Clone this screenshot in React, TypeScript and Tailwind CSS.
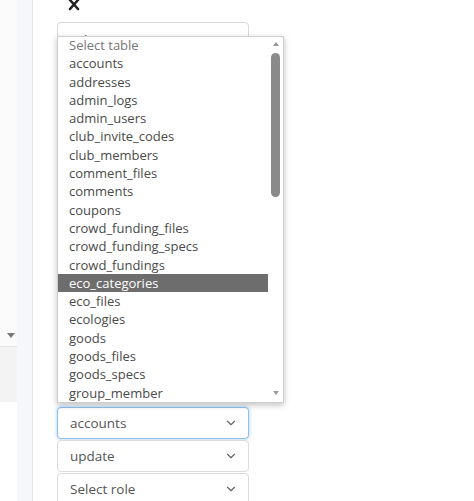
import { ChevronDown } from 'lucide-react'

const tables = [
  'accounts',
  'addresses',
  'admin_logs',
  'admin_users',
  'club_invite_codes',
  'club_members',
  'comment_files',
  'comments',
  'coupons',
  'crowd_funding_files',
  'crowd_funding_specs',
  'crowd_fundings',
  'eco_categories',
  'eco_files',
  'ecologies',
  'goods',
  'goods_files',
  'goods_specs',
  'group_member',
]

function SelectBox({ label, focused = false }: { label: string; focused?: boolean }) {
  return (
    <div
      className={`flex items-center justify-between w-[192px] h-[32px] pl-[12px] pr-[10px] rounded-[4px] bg-white border ${
        focused ? 'border-[#8cc0ee] shadow-[0_0_3px_1px_rgba(100,160,230,0.35)]' : 'border-[#dcdcdc]'
      }`}
    >
      <span className="text-[13.5px] text-[#555]">{label}</span>
      <ChevronDown size={14} strokeWidth={2} className="text-[#666]" />
    </div>
  )
}

export default function App() {
  return (
    <div
      className="relative flex w-[474px] h-[501px] overflow-hidden bg-white"
      style={{ fontFamily: '"Open Sans", "Noto Sans", sans-serif' }}
    >
      {/* side panel edge */}
      <div className="flex flex-col w-[17px]">
        <div className="relative h-[347px] bg-[#fbfbfc] border-b border-[#e3e3e3]">
          <span className="absolute left-[7px] bottom-[8px] w-0 h-0 border-l-[4px] border-r-[4px] border-t-[5px] border-l-transparent border-r-transparent border-t-[#777]" />
        </div>
        <div className="h-[55px] bg-[#f3f3f4]" />
        <div className="flex-1 bg-white" />
      </div>
      <div className="w-[16px] bg-[#f5f7fa] border-r border-[#e4e7eb]" />

      {/* main */}
      <div className="relative flex-1 pl-[24px]">
        <div className="pl-[11px] h-[23px]">
          <svg width="12" height="12" viewBox="0 0 12 12" className="-mt-[1px]">
            <path d="M2 1 L10 10 M10 1 L2 10" stroke="#222" strokeWidth="2.6" strokeLinecap="round" />
          </svg>
        </div>
        <div className="flex flex-col gap-[1px]">
          <div className="flex items-center w-[192px] h-[32px] pl-[12px] pt-[4px] rounded-[4px] bg-white border border-[#d8d8d8]">
            <span className="text-[13.5px] text-[#555]">select...</span>
          </div>
          <div className="h-[351px]" />
          <SelectBox label="accounts" focused />
          <SelectBox label="update" />
          <SelectBox label="Select role" />
        </div>

        {/* open dropdown list */}
        <div className="absolute left-[24px] top-[36px] flex w-[227px] h-[367px] bg-white border border-[#cfcfcf] shadow-[0_2px_6px_rgba(0,0,0,0.25)]">
          <ul className="flex-1 -mt-[1px] text-[13px] text-[#4a4a4a]">
            <li className="h-[18.3px] leading-[18.3px] pl-[11px] text-[#777]">Select table</li>
            {tables.map((t) => (
              <li
                key={t}
                className={`h-[18.3px] leading-[18.3px] pl-[11px] ${
                  t === 'eco_categories' ? 'bg-[#6d6d6d] text-white' : ''
                }`}
              >
                {t}
              </li>
            ))}
          </ul>
          <div className="flex flex-col items-center w-[15px] py-[5px]">
            <span className="w-0 h-0 border-l-[3.5px] border-r-[3.5px] border-b-[4px] border-l-transparent border-r-transparent border-b-[#999]" />
            <div className="mt-[7px] w-[9px] h-[144px] rounded-full bg-[#8a8a8a]" />
            <div className="flex-1" />
            <span className="mb-[2px] w-0 h-0 border-l-[3.5px] border-r-[3.5px] border-t-[4px] border-l-transparent border-r-transparent border-t-[#999]" />
          </div>
        </div>
      </div>
    </div>
  )
}
